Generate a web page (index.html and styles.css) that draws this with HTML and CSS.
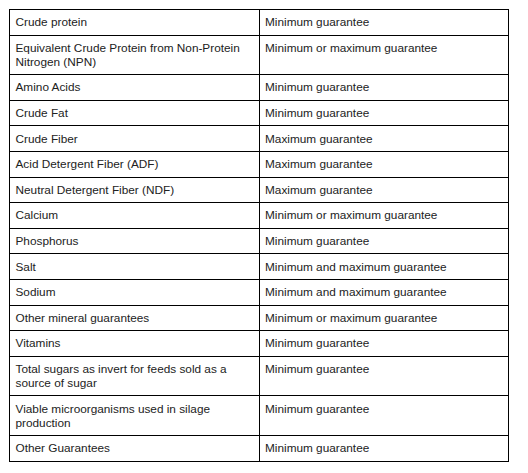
FILE: index.html
```html
<!DOCTYPE html>
<html>
<head>
<meta charset="utf-8">
<link rel="stylesheet" href="styles.css">
</head>
<body>
<table class="guarantees">
  <tr><td>Crude protein</td><td>Minimum guarantee</td></tr>
  <tr><td>Equivalent Crude Protein from Non-Protein Nitrogen (NPN)</td><td>Minimum or maximum guarantee</td></tr>
  <tr><td>Amino Acids</td><td>Minimum guarantee</td></tr>
  <tr><td>Crude Fat</td><td>Minimum guarantee</td></tr>
  <tr><td>Crude Fiber</td><td>Maximum guarantee</td></tr>
  <tr><td>Acid Detergent Fiber (ADF)</td><td>Maximum guarantee</td></tr>
  <tr><td>Neutral Detergent Fiber (NDF)</td><td>Maximum guarantee</td></tr>
  <tr><td>Calcium</td><td>Minimum or maximum guarantee</td></tr>
  <tr><td>Phosphorus</td><td>Minimum guarantee</td></tr>
  <tr><td>Salt</td><td>Minimum and maximum guarantee</td></tr>
  <tr><td>Sodium</td><td>Minimum and maximum guarantee</td></tr>
  <tr><td>Other mineral guarantees</td><td>Minimum or maximum guarantee</td></tr>
  <tr><td>Vitamins</td><td>Minimum guarantee</td></tr>
  <tr><td>Total sugars as invert for feeds sold as a source of sugar</td><td>Minimum guarantee</td></tr>
  <tr><td>Viable microorganisms used in silage production</td><td>Minimum guarantee</td></tr>
  <tr><td>Other Guarantees</td><td>Minimum guarantee</td></tr>
</table>
</body>
</html>
```

FILE: styles.css
```css
html, body {
  margin: 0;
  padding: 0;
  background: #ffffff;
}

body {
  padding: 9px;
  font-family: "Liberation Sans", Arial, sans-serif;
  font-size: 11.8px;
  color: #222222;
}

.guarantees {
  width: 500px;
  border-collapse: collapse;
  table-layout: fixed;
}

.guarantees td {
  width: 50%;
  border: 1px solid #000000;
  padding: 5.3px 6px 5.3px 5.5px;
  line-height: 14px;
  vertical-align: top;
  text-align: left;
}
```
